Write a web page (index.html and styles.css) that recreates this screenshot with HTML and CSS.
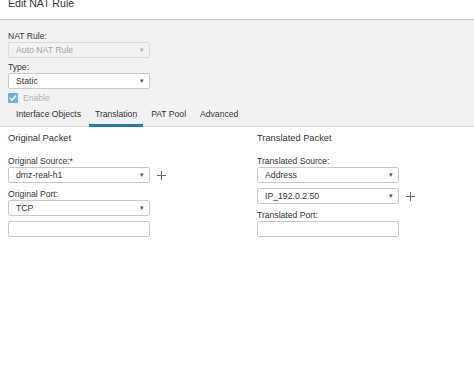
FILE: index.html
```html
<!DOCTYPE html>
<html>
<head>
  <link rel="stylesheet" href="styles.css">
</head>
<body>
  <div class="dialog-header">
    <h1 class="dialog-title">Edit NAT Rule</h1>
  </div>

  <div class="panel">
    <div class="field">
      <label class="label">NAT Rule:</label>
      <div class="select select-disabled">
        <span>Auto NAT Rule</span>
        <span class="caret">▾</span>
      </div>
    </div>
    <div class="field">
      <label class="label">Type:</label>
      <div class="select">
        <span>Static</span>
        <span class="caret">▾</span>
      </div>
    </div>
    <div class="check-row">
      <span class="checkbox">
        <svg width="8" height="8" viewBox="0 0 8 8"><path d="M1 4.2 L3.1 6.2 L7 1.6" fill="none" stroke="#fff" stroke-width="1.5"/></svg>
      </span>
      <span class="check-label">Enable</span>
    </div>
    <div class="tabs">
      <div class="tab">Interface Objects</div>
      <div class="tab active">Translation</div>
      <div class="tab">PAT Pool</div>
      <div class="tab">Advanced</div>
    </div>
  </div>

  <div class="columns">
    <div class="column">
      <h3 class="section-title">Original Packet</h3>
      <div class="field">
        <label class="label">Original Source:*</label>
        <div class="select-row">
          <div class="select">
            <span>dmz-real-h1</span>
            <span class="caret">▾</span>
          </div>
          <svg class="add" width="9" height="9" viewBox="0 0 9 9"><path d="M4.5 0 V9 M0 4.5 H9" stroke="#666" stroke-width="1"/></svg>
        </div>
      </div>
      <div class="field">
        <label class="label">Original Port:</label>
        <div class="select">
          <span>TCP</span>
          <span class="caret">▾</span>
        </div>
        <div class="input input-stacked"></div>
      </div>
    </div>

    <div class="column">
      <h3 class="section-title">Translated Packet</h3>
      <div class="field">
        <label class="label">Translated Source:</label>
        <div class="select">
          <span>Address</span>
          <span class="caret">▾</span>
        </div>
        <div class="select-row stacked">
          <div class="select">
            <span>IP_192.0.2.50</span>
            <span class="caret">▾</span>
          </div>
          <svg class="add" width="9" height="9" viewBox="0 0 9 9"><path d="M4.5 0 V9 M0 4.5 H9" stroke="#666" stroke-width="1"/></svg>
        </div>
      </div>
      <div class="field">
        <label class="label">Translated Port:</label>
        <div class="input"></div>
      </div>
    </div>
  </div>
</body>
</html>
```

FILE: styles.css
```css
:root {
  --text: #333333;
  --muted: #a6a6a6;
  --panel: #f2f2f2;
  --border: #c8c8c8;
  --line: #d6d6d6;
  --primary: #1f7cb0;
}

body {
  margin: 0;
  font-family: "Liberation Sans", Arial, sans-serif;
  color: var(--text);
  background: #ffffff;
}

.dialog-header {
  height: 19px;
  overflow: hidden;
  background: #ffffff;
  box-shadow: 0 1px 2px rgba(0, 0, 0, 0.08);
  position: relative;
  z-index: 1;
}

.dialog-title {
  margin: -3px 0 0 8px;
  font-size: 10.6px;
  line-height: 13px;
  font-weight: 400;
  color: #333;
}

.panel {
  background: var(--panel);
  border-top: 1px solid var(--line);
  border-bottom: 1px solid var(--line);
  padding: 11px 8px 0;
}

.field {
  margin-bottom: 4px;
}

.label {
  display: block;
  font-size: 8.6px;
  line-height: 11px;
  color: var(--text);
}

.select {
  box-sizing: border-box;
  width: 142px;
  height: 16px;
  display: flex;
  align-items: center;
  justify-content: space-between;
  padding: 0 5px 0 7px;
  background: #ffffff;
  border: 1px solid var(--border);
  border-radius: 2px;
  font-size: 8.7px;
  color: var(--text);
}

.select-disabled {
  background: var(--panel);
  border-color: #d9d9d9;
  color: var(--muted);
}

.caret {
  font-size: 7px;
  color: #555;
}

.select-disabled .caret {
  color: #aaa;
}

.check-row {
  display: flex;
  align-items: center;
  height: 10px;
  margin-top: 3px;
}

.checkbox {
  width: 10px;
  height: 10px;
  border-radius: 1px;
  background: #6fb0dc;
  display: flex;
  align-items: center;
  justify-content: center;
}

.check-label {
  margin-left: 5px;
  font-size: 8.6px;
  color: #b5b5b5;
}

.tabs {
  display: flex;
  margin: 2px 0 -1px 2px;
}

.tab {
  padding: 0 6px;
  margin-right: 2px;
  height: 19px;
  line-height: 19px;
  font-size: 8.6px;
  color: var(--text);
  border-bottom: 3px solid transparent;
}

.tab.active {
  border-bottom-color: var(--primary);
}

.columns {
  display: grid;
  grid-template-columns: 249px 1fr;
  padding: 0 8px;
}

.columns .field {
  margin-bottom: 6px;
}

.section-title {
  margin: 5px 0 12px;
  font-size: 9.3px;
  line-height: 12px;
  font-weight: 400;
  color: var(--text);
}

.select-row {
  display: flex;
  align-items: center;
}

.stacked {
  margin-top: 5px;
}

.add {
  margin-left: 7px;
}

.input {
  box-sizing: border-box;
  width: 142px;
  height: 16px;
  border: 1px solid var(--border);
  border-radius: 2px;
  background: #ffffff;
}

.input-stacked {
  margin-top: 5px;
}
```
